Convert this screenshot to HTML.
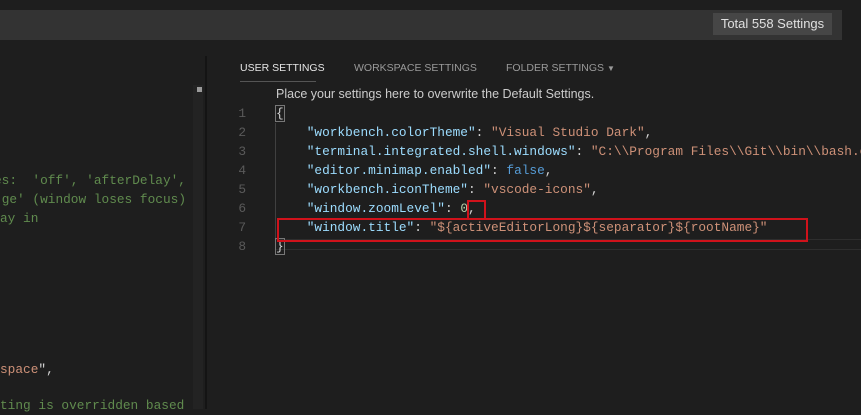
<!DOCTYPE html>
<html><head><style>
body{margin:0;width:861px;height:409px;background:#1e1e1e;overflow:hidden;position:relative;font-family:"Liberation Sans",sans-serif}
.a{position:absolute;white-space:pre}
.m{font-family:"Liberation Mono",monospace;font-size:12.8px;line-height:19px}
.k{color:#9cdcfe}.s{color:#ce9178}.b{color:#569cd6}.c{color:#608b4e}.p{color:#d4d4d4}
.ln{color:#5a5a5a;width:20px;text-align:right}
</style></head><body>
<div class="a" style="left:0;top:10px;width:842px;height:30px;background:#333"></div>
<div class="a" style="left:713px;top:13px;width:119px;height:22px;background:#464646;color:#e0e0e0;font-size:13px;line-height:22px;text-align:center">Total 558 Settings</div>
<div class="a" style="left:205px;top:56px;width:2px;height:353px;background:#141414"></div>
<div class="a" style="left:193px;top:85px;width:10px;height:324px;background:#232323"></div>
<div class="a" style="left:197px;top:87px;width:5px;height:5px;background:#9a9a9a"></div>
<div class="a m c" style="left:-10px;top:171px;width:196px;text-align:right;overflow:hidden">es:  'off', 'afterDelay',</div>
<div class="a m c" style="left:-10px;top:190px;width:196px;text-align:right;overflow:hidden">ge' (window loses focus)</div>
<div class="a m c" style="left:0;top:209px">ay in</div>
<div class="a m s" style="left:0;top:360px">space<span class="p">",</span></div>
<div class="a m c" style="left:0;top:396px">ting is overridden based</div>
<div class="a" style="left:240px;top:62px;font-size:10.5px;color:#e6e6e6">USER SETTINGS</div>
<div class="a" style="left:240px;top:81px;width:76px;height:1px;background:#555"></div>
<div class="a" style="left:354px;top:62px;font-size:10.5px;color:#9a9a9a">WORKSPACE SETTINGS</div>
<div class="a" style="left:506px;top:62px;font-size:10.5px;color:#9a9a9a">FOLDER SETTINGS <span style="font-size:8px">▼</span></div>
<div class="a" style="left:276px;top:87px;font-size:12.5px;color:#cccccc">Place your settings here to overwrite the Default Settings.</div>
<div class="a" style="left:275px;top:123px;width:1px;height:117px;background:#404040"></div>
<div class="a" style="left:276px;top:239px;width:585px;height:1px;background:#2e2e2e"></div>
<div class="a" style="left:276px;top:249px;width:585px;height:1px;background:#2e2e2e"></div>
<div class="a m" style="left:226px;top:104px;white-space:normal"><div class="ln">1</div><div class="ln">2</div><div class="ln">3</div><div class="ln">4</div><div class="ln">5</div><div class="ln">6</div><div class="ln">7</div><div class="ln">8</div></div>
<div class="a m p" style="left:276px;top:104px"><span style="outline:1px solid #777">{</span>
<span>    <span class="k">"workbench.colorTheme"</span>: <span class="s">"Visual Studio Dark"</span>,</span>
<span>    <span class="k">"terminal.integrated.shell.windows"</span>: <span class="s">"C:\\Program Files\\Git\\bin\\bash.exe"</span>,</span>
<span>    <span class="k">"editor.minimap.enabled"</span>: <span class="b">false</span>,</span>
<span>    <span class="k">"workbench.iconTheme"</span>: <span class="s">"vscode-icons"</span>,</span>
<span>    <span class="k">"window.zoomLevel"</span>: <span style="color:#b5cea8">0</span>,</span>
<span>    <span class="k">"window.title"</span>: <span class="s">"${activeEditorLong}${separator}${rootName}"</span></span>
<span style="outline:1px solid #777">}</span></div>
<div class="a" style="left:467px;top:200px;width:15px;height:16px;border:2px solid #d0121b"></div>
<div class="a" style="left:277px;top:218px;width:527px;height:20px;border:2px solid #d0121b"></div>
</body></html>
